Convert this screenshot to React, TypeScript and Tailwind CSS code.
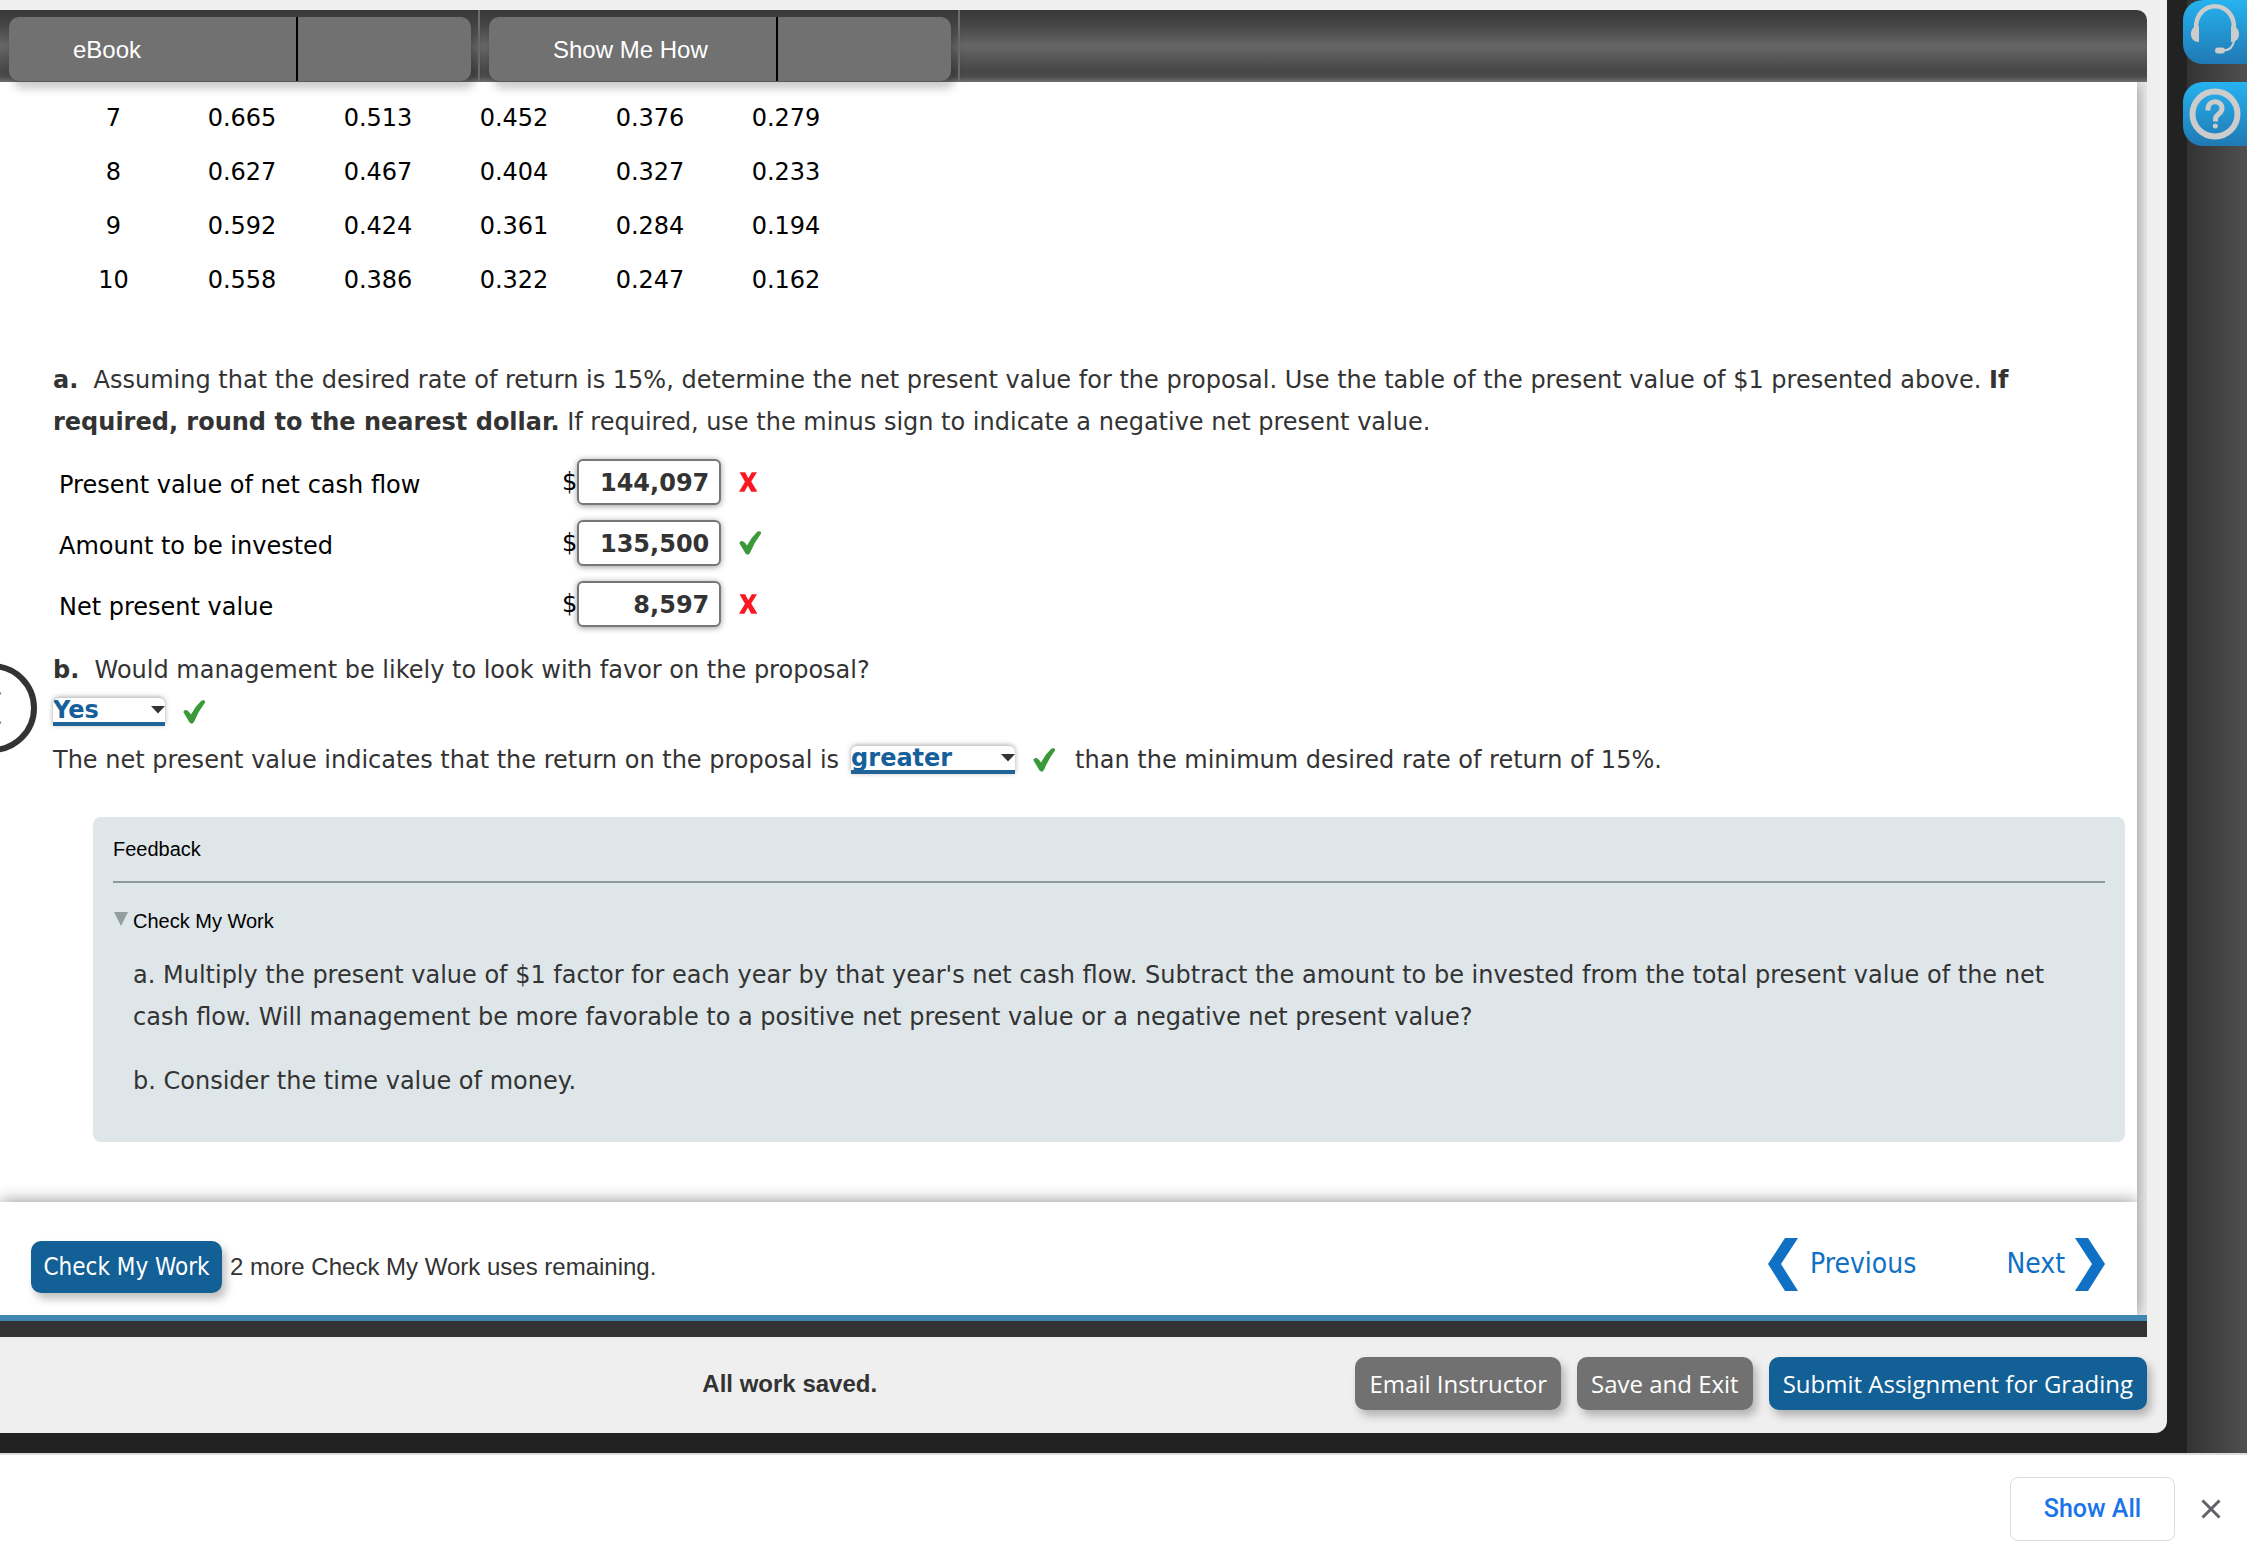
import { useState } from "react";

const factors = [
  { year: 7, values: ['0.665', '0.513', '0.452', '0.376', '0.279'] },
  { year: 8, values: ['0.627', '0.467', '0.404', '0.327', '0.233'] },
  { year: 9, values: ['0.592', '0.424', '0.361', '0.284', '0.194'] },
  { year: 10, values: ['0.558', '0.386', '0.322', '0.247', '0.162'] },
]

const initialAnswers = [
  { id: 'cash-flow', label: 'Present value of net cash flow', value: '144,097', correct: false },
  { id: 'invested', label: 'Amount to be invested', value: '135,500', correct: true },
  { id: 'npv', label: 'Net present value', value: '8,597', correct: false },
]

function CorrectIcon(){
  return(
    <svg viewBox="0 0 22 24" className="h-6 w-[22px] shrink-0" aria-label="Correct">
      <path d="M0.3 12 Q1.5 9 4.500 10.5 Q6.5 12 8 14.5 Q12 6.5 18.500 0.5 Q22.5 -0.8 22 2.5 Q15.500 11 11 22 Q9 25 6.500 22.5 Z" fill="#3a9a3a" />
    </svg>
  )
}

function IncorrectIcon(){
  return(
    <svg viewBox="0 0 18 20" className="h-5 w-[18px] shrink-0" aria-label="Incorrect">
      <path d="M0.5 0.3 H6.2 L9.3 6.2 L12.8 0.3 H18 L12.2 9.6 L18.500 19.7 H12.2 L8.9 13.6 L5.4 19.7 H0 L6 9.8 Z" fill="#fb1722" />
    </svg>
  )
}

function ToolbarButton({ label }: { label: string }){
  return(
    <div className="flex h-[72px] w-[480px] items-end border-r-2 border-[#6e6e6e] pb-px pl-[9px]">
      <button className="flex h-16 w-[462px] rounded-[10px] bg-[#717171] text-left text-2xl text-white shadow-[4px_8px_8px_rgba(0,0,0,0.2)]">
        <span className="h-16 w-[289px] border-r-2 border-black pl-16 leading-[66px]">{label}</span>
      </button>
    </div>
  )
}

function AnswerSelect({ label, options, className }: { label: string, options: string[], className: string }){
  return(
    <span className="relative inline-flex">
      <select
        aria-label={label}
        className={`h-7 appearance-none rounded-t-md border-b-4 border-[#1f6397] bg-white p-0 text-2xl leading-6 font-bold text-[#15609a] shadow-[0_-1px_5px_rgba(0,0,0,0.35)] ${className}`}
      >
        {options.map((option) => <option key={option}>{option}</option>)}
      </select>
      <svg viewBox="0 0 14 8" className="pointer-events-none absolute top-2 right-0 h-2 w-[14px]">
        <path d="M0 0 H14 L7 7.5 Z" fill="#333" />
      </svg>
    </span>
  )
}

export default function App(){

  const [answers, setAnswers] = useState(initialAnswers)

  function handleChange(id: string, value: string){
    setAnswers(answers.map((item) => item.id === id ? { ...item, value } : item))
  }

  return(
    <div className="min-h-screen overflow-x-hidden bg-white font-['Liberation_Sans',Arial,sans-serif] text-[#333]">
      <div className="relative flex border-b-2 border-[#dadce0] bg-[#222]">

        <div className="min-w-0 flex-1 pr-5 pb-5">
          <div className="rounded-br-[12px] bg-[#efefef] pt-[10px] pr-5">

            <nav className="flex h-[72px] rounded-tr-[10px] bg-[linear-gradient(to_bottom,#383838_0%,#444_20%,#666_50%,#474747_84%,#4a4a4a_92%,#6f6f6f_100%)]">
              <ToolbarButton label="eBook" />
              <ToolbarButton label="Show Me How" />
            </nav>

            <div className="overflow-hidden pr-[10px]">
              <main className="bg-white pl-[53px] pb-[60px] font-['DejaVu_Sans',Verdana,sans-serif] text-2xl shadow-[0_0_16px_rgba(0,0,0,0.45)]">
                <table className="text-center text-black">
                  <tbody>
                    {factors.map((row) => (
                      <tr key={row.year} className="h-[54px]">
                        <td className="w-[121px] pt-[18px]">{row.year}</td>
                        {row.values.map((value) => <td key={value} className="w-[136px] pt-[18px]">{value}</td>)}
                      </tr>
                    ))}
                  </tbody>
                </table>

                <p className="mt-[61px] pr-20 leading-[42px]">
                  <b>a.</b>&nbsp; Assuming that the desired rate of return is 15%, determine the net present value for the proposal. Use the table of the present value of $1 presented above. <b>If required, round to the nearest dollar.</b> If required, use the minus sign to indicate a negative net present value.
                </p>

                <div className="mt-4 flex flex-col gap-[15px] pl-[6px] text-black">
                  {answers.map((item) => (
                    <div key={item.id} className="flex items-center">
                      <label htmlFor={item.id} className="w-[503px] pt-[6px]">{item.label}</label>
                      <span>$</span>
                      <input
                        id={item.id}
                        type="text"
                        value={item.value}
                        onChange={(event) => handleChange(item.id, event.target.value)}
                        className="mr-[18px] h-[46px] w-36 rounded-md border-2 border-[#777] bg-white pt-[2px] pr-[10px] text-right font-bold text-[#333] shadow-[0_1px_6px_rgba(0,0,0,0.4)]"
                      />
                      {item.correct ? <CorrectIcon /> : <IncorrectIcon />}
                    </div>
                  ))}
                </div>

                <p className="mt-[22px] leading-[42px]"><b>b.</b>&nbsp; Would management be likely to look with favor on the proposal?</p>
                <div className="flex h-[42px] items-center gap-[18px]">
                  <AnswerSelect label="Likely to look with favor" options={['Yes', 'No']} className="w-28" />
                  <CorrectIcon />
                </div>
                <p className="mt-[6px] flex h-[42px] items-center">
                  <span className="mr-3">The net present value indicates that the return on the proposal is</span>
                  <AnswerSelect label="Return on the proposal" options={['greater', 'less']} className="w-[164px]" />
                  <span className="mr-5 ml-[18px] flex"><CorrectIcon /></span>
                  <span>than the minimum desired rate of return of 15%.</span>
                </p>

                <section className="mt-9 mr-3 ml-10 rounded-lg bg-[#dee6e9] px-5 pt-4 pb-10">
                  <h2 className="border-b-2 border-[#909a9d] pb-4 font-['Liberation_Sans',Arial,sans-serif] text-xl leading-8 text-black">Feedback</h2>
                  <button className="mt-6 flex items-start gap-1 font-['Liberation_Sans',Arial,sans-serif] text-xl leading-7 text-black">
                    <svg viewBox="0 0 16 16" className="mt-1 h-4 w-4">
                      <path d="M1 1 H15 L8 15 Z" fill="#939da0" />
                    </svg>
                    Check My Work
                  </button>
                  <div className="mt-[19px] px-5 leading-[42px]">
                    <p>a. Multiply the present value of $1 factor for each year by that year's net cash flow. Subtract the amount to be invested from the total present value of the net cash flow. Will management be more favorable to a positive net present value or a negative net present value?</p>
                    <p className="mt-[22px]">b. Consider the time value of money.</p>
                  </div>
                </section>
              </main>

              <div className="relative flex h-[113px] items-center bg-white pt-[17px] pr-8 pl-[31px] shadow-[0_0_16px_rgba(0,0,0,0.45)]">
                <button className="h-[52px] w-[191px] rounded-[10px] bg-[#136096] font-['DejaVu_Sans_Condensed',Tahoma,sans-serif] text-2xl text-white shadow-[4px_6px_8px_rgba(0,0,0,0.25)]">Check My Work</button>
                <span className="ml-2 text-2xl">2 more Check My Work uses remaining.</span>
                <div className="ml-auto flex items-center pb-[6px] font-['DejaVu_Sans_Condensed',Tahoma,sans-serif] text-[28px] text-[#1070c4]">
                  <a href="#previous" className="flex items-center gap-3">
                    <svg viewBox="0 0 30 53" className="h-[53px] w-[30px]"><path d="M17 0 H30 L13 26 L30 53 H17 L0 26 Z" fill="#1070c4" /></svg>
                    Previous
                  </a>
                  <a href="#next" className="ml-[90px] flex items-center gap-[10px]">
                    Next
                    <svg viewBox="0 0 30 53" className="h-[53px] w-[30px]"><path d="M0 0 H13 L30 26 L13 53 H0 L17 26 Z" fill="#1070c4" /></svg>
                  </a>
                </div>
              </div>
            </div>

            <div className="h-[22px] border-t-[6px] border-[#4187b2] bg-[#333]" />

            <footer className="flex h-24 items-start gap-4 pt-5 text-2xl">
              <p className="flex-1 pl-60 text-center leading-[54px] font-bold">All work saved.</p>
              <div className="flex gap-4 font-['Open_Sans',sans-serif] text-white">
                <button className="h-[53px] rounded-[10px] bg-[#717171] px-[14px] shadow-[4px_6px_8px_rgba(0,0,0,0.25)]">Email Instructor</button>
                <button className="h-[53px] rounded-[10px] bg-[#717171] px-[14px] shadow-[4px_6px_8px_rgba(0,0,0,0.25)]">Save and Exit</button>
                <button className="h-[53px] rounded-[10px] bg-[#136096] px-[14px] shadow-[4px_6px_8px_rgba(0,0,0,0.25)]">Submit Assignment for Grading</button>
              </div>
            </footer>
          </div>
        </div>

        <div className="w-[60px] bg-linear-to-r from-[#333] to-[#505050]" />

        {/* support tabs pinned to the window edge */}
        <div className="absolute top-0 right-0 flex flex-col gap-[18px]">
          <button aria-label="Support" className="h-16 w-16 rounded-l-[20px] bg-linear-to-b from-[#25b3f0] to-[#2079b3]">
            <svg viewBox="0 0 64 64" className="h-16 w-16" fill="none" stroke="#ccc">
              <path d="M13 28 C13 -1 51 -1 51 28" strokeWidth="4.500" />
              <path d="M16 26 V42 C10 42 8 38 8 34 C8 30 10 26 16 26 Z M48 26 V42 C54 42 56 38 56 34 C56 30 54 26 48 26 Z" fill="#ccc" stroke="none" />
              <path d="M51 41 C50 47 46 50 41 50.500" strokeWidth="2" />
              <rect x="32" y="47.500" width="10" height="6" rx="3" fill="#ccc" stroke="none" />
            </svg>
          </button>
          <button aria-label="Help" className="h-16 w-16 rounded-l-[20px] bg-linear-to-b from-[#25b3f0] to-[#2079b3]">
            <svg viewBox="0 0 64 64" className="h-16 w-16" fill="none" stroke="#ccc">
              <circle cx="32" cy="32" r="22.500" strokeWidth="6" />
              <path d="M25 28.500 V27 C25 17.500 39 17.500 39 26.500 C39 32 32.500 32 32.500 37 V39.500" strokeWidth="5" />
              <circle cx="32.300" cy="44" r="2.500" fill="#ccc" stroke="none" />
            </svg>
          </button>
        </div>

        {/* collapse handle, half outside the left edge */}
        <button aria-label="Collapse" className="absolute top-[663px] -left-[53px] h-[90px] w-[90px]">
          <svg viewBox="0 0 90 90" className="h-[90px] w-[90px]" fill="none">
            <circle cx="45" cy="45" r="42" fill="#fff" stroke="#333" strokeWidth="6" />
            <path d="M53 29 L38 45 L53 61" stroke="#777" strokeWidth="4" />
          </svg>
        </button>
      </div>

      <div className="flex items-center justify-end pt-[22px] pr-[26px]">
        <button className="h-16 w-[165px] rounded-lg border border-[#dadce0] font-[Roboto,sans-serif] text-[25px] font-medium text-[#1a73e8]">Show All</button>
        <button aria-label="Close" className="ml-[26px]">
          <svg viewBox="0 0 20 20" className="h-5 w-5" stroke="#5f6368" strokeWidth="3"><path d="M1.500 1.500 L18.500 18.500 M18.500 1.500 L1.500 18.500" /></svg>
        </button>
      </div>
    </div>
  )
}
